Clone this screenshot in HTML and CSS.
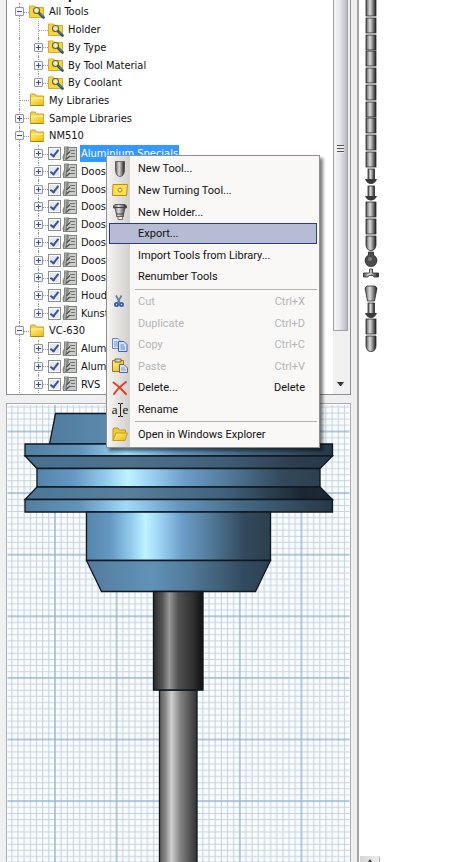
FILE: index.html
```html
<!DOCTYPE html>
<html lang="en">
<head>
  <meta charset="UTF-8" />
  <meta name="viewport" content="width=device-width, initial-scale=1.0" />
  <title>Tool Library</title>
  <link rel="stylesheet" href="styles.css">
</head>
<body>
  <!-- shared icons -->
  <svg class="defs" width="0" height="0" aria-hidden="true">
    <defs>
      <linearGradient id="gold" x1="0" y1="0" x2="1" y2="1">
        <stop offset="0" stop-color="#fff07a" />
        <stop offset="1" stop-color="#ecb90c" />
      </linearGradient>
      <linearGradient id="steel">
        <stop offset="0" stop-color="#444" />
        <stop offset="0.15" stop-color="#8a8a8a" />
        <stop offset="0.4" stop-color="#dcdcdc" />
        <stop offset="0.65" stop-color="#8c8c8c" />
        <stop offset="1" stop-color="#1c1c1c" />
      </linearGradient>
      <symbol id="i-folder" viewBox="0 0 16 16">
        <path d="M1.500 13.500V3Q1.500 2 2.500 2H6L7.500 4H14.500V13.500Z" fill="#f4d446" stroke="#c8a128" />
        <path d="M2 13V6H14.500V13Z" fill="url(#gold)" />
        <path d="M2 6H14" stroke="#fff6a8" />
        <path d="M1.500 13.500H14.500" stroke="#ad8410" />
      </symbol>
      <symbol id="i-search" viewBox="0 0 16 16">
        <path d="M0.500 13.500V2H5.500L7 3.500H14.500V13.500Z" fill="#f8d438" stroke="#d8ae20" />
        <circle cx="7.500" cy="6.500" r="3" fill="#f3eca0" stroke="#55644a" stroke-width="1.100" />
        <path d="M10.500 9.500L14.500 13.500" stroke="#22507e" stroke-width="2.600" stroke-linecap="round" />
        <path d="M11 9.500L14 12.500" stroke="#72b4c9" stroke-width="0.900" />
      </symbol>
      <symbol id="i-lib" viewBox="0 0 15 16">
        <rect x="4.500" y="1.500" width="10" height="13" fill="#cbccc8" stroke="#7f817e" />
        <path d="M8 4.500H13M9 7.500H13M8 10.500H13" stroke="#707070" />
        <path d="M2 0.500H7L6.500 5L5 8L4.500 15H1L0.500 11L2 7Z" fill="#828584" />
        <path d="M4 1L3.500 8L2.500 14" stroke="#b9bbb9" fill="none" />
        <path d="M4.500 9L8 5.500M4.500 13L8 10" stroke="#4c4c4c" stroke-width="1.400" />
      </symbol>
    </defs>
  </svg>

  <div class="app">
    <aside class="side">
      <section class="tree-panel">
        <div class="tree">
          <h1 class="tree-title"><span>p</span></h1>
          <ul class="rows">
            <li class="row"><span class="cell line stub"><button class="toggle open" aria-label="Collapse All Tools"></button></span><svg class="icon"><use href="#i-search" /></svg><span class="name">All Tools</span></li>
            <li class="row"><span class="cell line"></span><span class="cell line stub"></span><svg class="icon"><use href="#i-search" /></svg><span class="name">Holder</span></li>
            <li class="row"><span class="cell line"></span><span class="cell line stub"><button class="toggle" aria-label="Expand By Type"></button></span><svg class="icon"><use href="#i-search" /></svg><span class="name">By Type</span></li>
            <li class="row"><span class="cell line"></span><span class="cell line stub"><button class="toggle" aria-label="Expand By Tool Material"></button></span><svg class="icon"><use href="#i-search" /></svg><span class="name">By Tool Material</span></li>
            <li class="row"><span class="cell line"></span><span class="cell line stub last"><button class="toggle" aria-label="Expand By Coolant"></button></span><svg class="icon"><use href="#i-search" /></svg><span class="name">By Coolant</span></li>
            <li class="row"><span class="cell line stub"></span><svg class="icon"><use href="#i-folder" /></svg><span class="name">My Libraries</span></li>
            <li class="row"><span class="cell line stub"><button class="toggle" aria-label="Expand Sample Libraries"></button></span><svg class="icon"><use href="#i-folder" /></svg><span class="name">Sample Libraries</span></li>
            <li class="row"><span class="cell line stub"><button class="toggle open" aria-label="Collapse NM510"></button></span><svg class="icon"><use href="#i-folder" /></svg><span class="name">NM510</span></li>
            <li class="row"><span class="cell line"></span><span class="cell line stub"><button class="toggle" aria-label="Expand"></button></span><input type="checkbox" id="lib1" checked><svg class="icon lib"><use href="#i-lib" /></svg><label class="name selected" for="lib1">Aluminium Specials</label></li>
            <li class="row"><span class="cell line"></span><span class="cell line stub"><button class="toggle" aria-label="Expand"></button></span><input type="checkbox" id="lib2" checked><svg class="icon lib"><use href="#i-lib" /></svg><label class="name" for="lib2">Doos</label></li>
            <li class="row"><span class="cell line"></span><span class="cell line stub"><button class="toggle" aria-label="Expand"></button></span><input type="checkbox" id="lib3" checked><svg class="icon lib"><use href="#i-lib" /></svg><label class="name" for="lib3">Doos</label></li>
            <li class="row"><span class="cell line"></span><span class="cell line stub"><button class="toggle" aria-label="Expand"></button></span><input type="checkbox" id="lib4" checked><svg class="icon lib"><use href="#i-lib" /></svg><label class="name" for="lib4">Doos</label></li>
            <li class="row"><span class="cell line"></span><span class="cell line stub"><button class="toggle" aria-label="Expand"></button></span><input type="checkbox" id="lib5" checked><svg class="icon lib"><use href="#i-lib" /></svg><label class="name" for="lib5">Doos</label></li>
            <li class="row"><span class="cell line"></span><span class="cell line stub"><button class="toggle" aria-label="Expand"></button></span><input type="checkbox" id="lib6" checked><svg class="icon lib"><use href="#i-lib" /></svg><label class="name" for="lib6">Doos</label></li>
            <li class="row"><span class="cell line"></span><span class="cell line stub"><button class="toggle" aria-label="Expand"></button></span><input type="checkbox" id="lib7" checked><svg class="icon lib"><use href="#i-lib" /></svg><label class="name" for="lib7">Doos</label></li>
            <li class="row"><span class="cell line"></span><span class="cell line stub"><button class="toggle" aria-label="Expand"></button></span><input type="checkbox" id="lib8" checked><svg class="icon lib"><use href="#i-lib" /></svg><label class="name" for="lib8">Doos</label></li>
            <li class="row"><span class="cell line"></span><span class="cell line stub"><button class="toggle" aria-label="Expand"></button></span><input type="checkbox" id="lib9" checked><svg class="icon lib"><use href="#i-lib" /></svg><label class="name" for="lib9">Houd</label></li>
            <li class="row"><span class="cell line"></span><span class="cell line stub last"><button class="toggle" aria-label="Expand"></button></span><input type="checkbox" id="lib10" checked><svg class="icon lib"><use href="#i-lib" /></svg><label class="name" for="lib10">Kunst</label></li>
            <li class="row"><span class="cell line stub"><button class="toggle open" aria-label="Collapse VC-630"></button></span><svg class="icon"><use href="#i-folder" /></svg><span class="name">VC-630</span></li>
            <li class="row"><span class="cell line"></span><span class="cell line stub"><button class="toggle" aria-label="Expand"></button></span><input type="checkbox" id="lib11" checked><svg class="icon lib"><use href="#i-lib" /></svg><label class="name" for="lib11">Alumi</label></li>
            <li class="row"><span class="cell line"></span><span class="cell line stub"><button class="toggle" aria-label="Expand"></button></span><input type="checkbox" id="lib12" checked><svg class="icon lib"><use href="#i-lib" /></svg><label class="name" for="lib12">Alumi</label></li>
            <li class="row"><span class="cell line"></span><span class="cell line stub"><button class="toggle" aria-label="Expand"></button></span><input type="checkbox" id="lib13" checked><svg class="icon lib"><use href="#i-lib" /></svg><label class="name" for="lib13">RVS</label></li>
          </ul>
        </div>
        <div class="scrollbar">
          <div class="thumb"><span class="grip"></span></div>
          <button class="scroll-down" aria-label="Scroll down"></button>
        </div>
      </section>

      <section class="preview">
        <svg class="drawing" viewBox="7 404 344 458" preserveAspectRatio="xMidYMin slice" role="img" aria-label="Holder and tool">
          <defs>
            <pattern id="grid" patternUnits="userSpaceOnUse" x="55.500" y="431.500" width="61.600" height="61.600">
              <path d="M6.160 0V61.600M12.320 0V61.600M18.480 0V61.600M24.640 0V61.600M30.800 0V61.600M36.960 0V61.600M43.120 0V61.600M49.280 0V61.600M55.440 0V61.600" stroke="#c6cddd" />
              <path d="M0 6.160H61.600M0 12.320H61.600M0 18.480H61.600M0 24.640H61.600M0 30.800H61.600M0 36.960H61.600M0 43.120H61.600M0 49.280H61.600M0 55.440H61.600" stroke="#c8d3de" />
              <path d="M0 0V61.600M61.600 0V61.600M0 0H61.600M0 61.600H61.600" stroke="#9bb3ce" stroke-width="1.400" />
            </pattern>
            <linearGradient id="blue">
              <stop offset="0" stop-color="#5684aa" />
              <stop offset="0.130" stop-color="#6598c4" />
              <stop offset="0.250" stop-color="#97cff0" />
              <stop offset="0.320" stop-color="#bff3ff" />
              <stop offset="0.390" stop-color="#a0d6f6" />
              <stop offset="0.520" stop-color="#6c9ec9" />
              <stop offset="0.700" stop-color="#4d7391" />
              <stop offset="0.860" stop-color="#33495c" />
              <stop offset="1" stop-color="#2c3f4e" />
            </linearGradient>
            <linearGradient id="rim">
              <stop offset="0" stop-color="#527ea2" />
              <stop offset="0.180" stop-color="#6394bd" />
              <stop offset="0.330" stop-color="#9fdaf9" />
              <stop offset="0.500" stop-color="#6596bf" />
              <stop offset="0.720" stop-color="#436682" />
              <stop offset="1" stop-color="#263846" />
            </linearGradient>
            <linearGradient id="groove">
              <stop offset="0" stop-color="#4a708f" />
              <stop offset="0.350" stop-color="#4f708a" />
              <stop offset="0.650" stop-color="#405d75" />
              <stop offset="0.880" stop-color="#2b3d4e" />
              <stop offset="1" stop-color="#263a4b" />
            </linearGradient>
            <linearGradient id="groove2">
              <stop offset="0" stop-color="#4d7596" />
              <stop offset="0.330" stop-color="#58809d" />
              <stop offset="0.650" stop-color="#41617b" />
              <stop offset="0.900" stop-color="#1a2733" />
              <stop offset="1" stop-color="#1c2a35" />
            </linearGradient>
            <linearGradient id="chamfer">
              <stop offset="0" stop-color="#527b9c" />
              <stop offset="0.350" stop-color="#6092b8" />
              <stop offset="0.550" stop-color="#527b9b" />
              <stop offset="0.850" stop-color="#334b60" />
              <stop offset="1" stop-color="#2c4253" />
            </linearGradient>
            <linearGradient id="dark">
              <stop offset="0" stop-color="#2b2b2b" />
              <stop offset="0.180" stop-color="#555" />
              <stop offset="0.320" stop-color="#979797" />
              <stop offset="0.500" stop-color="#515151" />
              <stop offset="0.800" stop-color="#303030" />
              <stop offset="1" stop-color="#111" />
            </linearGradient>
            <linearGradient id="cutter">
              <stop offset="0" stop-color="#5a5a5a" />
              <stop offset="0.150" stop-color="#858585" />
              <stop offset="0.320" stop-color="#d0d0d0" />
              <stop offset="0.550" stop-color="#848484" />
              <stop offset="0.800" stop-color="#555" />
              <stop offset="1" stop-color="#333" />
            </linearGradient>
          </defs>
          <rect x="8" y="405" width="342" height="1200" fill="#f9fdff" />
          <rect x="8" y="405" width="342" height="1200" fill="url(#grid)" />
          <g stroke="#0f1820" stroke-width="1.300">
            <path d="M56 413.500H301L307 444H50Z" fill="url(#chamfer)" />
            <path d="M25.500 444H333V456H25.500Z" fill="url(#rim)" />
            <path d="M25.500 456H333L320.500 468.500H37.500Z" fill="url(#groove)" />
            <path d="M37.500 468.500H320.500V487H37.500Z" fill="url(#blue)" />
            <path d="M37.500 487H320.500L333 499.500H25.500Z" fill="url(#groove2)" />
            <path d="M25.500 499.500H333V512H25.500Z" fill="url(#rim)" />
            <path d="M87 512H271V560.500H87Z" fill="url(#blue)" />
            <path d="M87 560.500H271L256 591.500H102Z" fill="url(#chamfer)" />
            <path d="M160 690H197.500V1600H160Z" fill="url(#cutter)" />
            <path d="M154 591.500H203.500V690H154Z" fill="url(#dark)" />
          </g>
        </svg>
      </section>
    </aside>

    <main class="content">
      <svg class="tool-strip" width="16" height="353" viewBox="0 0 16 353" role="img" aria-label="Tool list">
        <g fill="url(#steel)" stroke="#2b2b2b" stroke-width="0.800">
          <rect x="3" y="-1" width="10" height="17" />
          <rect x="3" y="18" width="10" height="15" />
          <rect x="3" y="35" width="10" height="15" />
          <rect x="3" y="51" width="10" height="15" />
          <rect x="3" y="68" width="10" height="15" />
          <rect x="3" y="85" width="10" height="15" />
          <rect x="3" y="102" width="10" height="15" />
          <rect x="3" y="118" width="10" height="15" />
          <rect x="3" y="135" width="10" height="15" />
          <rect x="3" y="152" width="10" height="15" />
          <rect x="5" y="169" width="6.500" height="11" />
          <rect x="5" y="186" width="6.500" height="11" />
          <rect x="3" y="202" width="10" height="15" />
          <rect x="3" y="219" width="10" height="15" />
          <path d="M3 236H13V245Q12.500 250.500 8 250.500Q3.500 250.500 3 245Z" />
          <path d="M5.500 252H10.500V255Q14 257 14 260.500Q13 266.500 8 266.500Q3 266.500 2 260.500Q2 257 5.500 255Z" fill="#4c4c4c" />
          <path d="M6.500 269H9.500V273H15.500V277H11L10 275.500H6L5 277H0.500V273H6.500Z" />
          <path d="M2 288L4 286H12L14 288L11.500 301H4.500Z" />
          <rect x="5" y="303" width="6.500" height="11" />
          <rect x="3" y="319" width="10" height="15" />
          <path d="M3 336H13V346Q12.500 351.500 8 351.500Q3.500 351.500 3 346Z" />
        </g>
        <path d="M2 179H14Q12 184 8 184Q4 184 2 179ZM2 196H14Q12 200.500 8 200.500Q4 200.500 2 196ZM2 313H14Q12 318 8 318Q4 318 2 313Z" fill="#3a3a3a" />
        <circle cx="7" cy="259" r="2" fill="#808080" />
      </svg>
      <button class="scroll-left" aria-label="Scroll left"></button>
    </main>
  </div>

  <div class="menu" role="menu">
    <button class="item" role="menuitem">
      <svg class="glyph" viewBox="0 0 16 16"><path d="M3.500 0.500H12.500V9Q12 15.500 8 15.500Q4 15.500 3.500 9Z" fill="url(#steel)" stroke="#444" stroke-width="0.700" /></svg>
      <span>New Tool...</span>
    </button>
    <button class="item" role="menuitem">
      <svg class="glyph" viewBox="0 0 16 16"><path d="M1 2.500H15.500L14.500 13.500H0.500Z" fill="#ffe04f" stroke="#bd8c1d" /><circle cx="8" cy="8" r="2" fill="#fff3b5" stroke="#a67c1c" /></svg>
      <span>New Turning Tool...</span>
    </button>
    <button class="item" role="menuitem">
      <svg class="glyph" viewBox="0 0 16 16"><path d="M3 0.500H13L14.500 2V4H13L11.500 10.500V12.500H4.500V10.500L3 4H1.500V2Z" fill="url(#steel)" stroke="#444" stroke-width="0.800" /><path d="M6 13V15.500H10.500V13" fill="#eee" stroke="#777" /><path d="M2 3.500H14M4 10H12" stroke="#444" /></svg>
      <span>New Holder...</span>
    </button>
    <button class="item active" role="menuitem">
      <span class="glyph"></span>
      <span>Export...</span>
    </button>
    <button class="item" role="menuitem">
      <span class="glyph"></span>
      <span>Import Tools from Library...</span>
    </button>
    <button class="item" role="menuitem">
      <span class="glyph"></span>
      <span>Renumber Tools</span>
    </button>
    <hr class="sep">
    <button class="item" role="menuitem" disabled>
      <svg class="glyph" viewBox="0 0 16 16"><path d="M4 2.500L8 10M9.500 2.500L5.500 10" stroke="#6a7890" stroke-width="1.600" /><circle cx="4.500" cy="11.500" r="1.600" fill="none" stroke="#345fae" stroke-width="1.800" /><circle cx="9.500" cy="11.500" r="1.600" fill="none" stroke="#345fae" stroke-width="1.800" /></svg>
      <span>Cut</span><kbd>Ctrl+X</kbd>
    </button>
    <button class="item" role="menuitem" disabled>
      <span class="glyph"></span>
      <span>Duplicate</span><kbd>Ctrl+D</kbd>
    </button>
    <button class="item" role="menuitem" disabled>
      <svg class="glyph" viewBox="0 0 16 16"><path d="M0.500 1.500H6L8.500 4V11.500H0.500Z" fill="#dce9fb" stroke="#6685c6" /><path d="M2 5H6M2 7H6M2 9H6" stroke="#6e91d4" /><path d="M6.500 4.500H12L15 7.500V14.500H6.500Z" fill="#d5e5fb" stroke="#3f65b8" /><path d="M8.500 8H12M8.500 10H13M8.500 12H13" stroke="#5c82cf" /></svg>
      <span>Copy</span><kbd>Ctrl+C</kbd>
    </button>
    <button class="item" role="menuitem" disabled>
      <svg class="glyph" viewBox="0 0 16 16"><path d="M0.500 2.500H11.500V13.500H0.500Z" fill="url(#gold)" stroke="#9a7a1e" /><path d="M3 1H9V4H3Z" fill="#ddd6b8" stroke="#75683f" /><path d="M7.500 6.500H12L15.500 10V14.500H7.500Z" fill="#dbe4f2" stroke="#56688e" /><path d="M9 10H13M9 12H14" stroke="#8194b8" /></svg>
      <span>Paste</span><kbd>Ctrl+V</kbd>
    </button>
    <button class="item" role="menuitem">
      <svg class="glyph" viewBox="0 0 16 16"><path d="M1.500 2.500Q8 7 14 14M14 2Q6 8 2 14" fill="none" stroke="#df4126" stroke-width="2" stroke-linecap="round" /></svg>
      <span>Delete...</span><kbd>Delete</kbd>
    </button>
    <button class="item" role="menuitem">
      <span class="glyph rename-glyph" aria-hidden="true"><span>a</span><svg width="5" height="14" viewBox="0 0 5 14"><path d="M0 0.500H2L2.500 1.500L3 0.500H5M2.500 1V13M0 13.500H2L2.500 12.500L3 13.500H5" fill="none" stroke="#222" /></svg><span>e</span></span>
      <span>Rename</span>
    </button>
    <hr class="sep">
    <button class="item" role="menuitem">
      <svg class="glyph" viewBox="0 0 16 16"><path d="M1 14.500V3Q1 2 2 2H6L7.500 4H13.500V7" fill="#f3cb2b" stroke="#c1951c" /><path d="M1 14.500L4 7H15.500L13 14.500Z" fill="url(#gold)" stroke="#c79b1d" /></svg>
      <span>Open in Windows Explorer</span>
    </button>
  </div>
</body>
</html>
```

FILE: styles.css
```css
*,
*::before,
*::after {
  box-sizing: border-box;
}
body {
  margin: 0;
  background: #fff;
  font-family: "DejaVu Sans Condensed", "DejaVu Sans", sans-serif;
  font-size: 11px;
  color: #111;
}
button {
  font: inherit;
  color: inherit;
  padding: 0;
  border: none;
  background: none;
}
.defs {
  position: absolute;
}
.app {
  display: grid;
  grid-template-columns: 359px 1fr;
  height: 100vh;
}

/* left side */
.side {
  display: flex;
  flex-direction: column;
  gap: 8px;
  min-height: 0;
  padding: 0 6px;
  background: #f0f0f0;
  border-right: 2px solid #a5a5a5;
}
.tree-panel {
  display: flex;
  height: 395px;
  background: #fff;
  border: 1px solid #8b8f96;
  border-top: none;
}
.tree {
  flex: 1;
  display: flex;
  flex-direction: column;
  padding: 0 0 1px 3px;
  min-width: 0;
}
.tree-title {
  display: flex;
  align-items: flex-end;
  height: 3px;
  margin: 0;
  padding-left: 58px;
  font-size: 12px;
  line-height: 15px;
  overflow: hidden;
}
.rows {
  flex: 1;
  display: grid;
  grid-auto-rows: 1fr;
  margin: 0;
  padding: 0;
  list-style: none;
}
.row {
  display: flex;
  align-items: center;
  min-height: 0;
}
.cell {
  position: relative;
  display: flex;
  align-items: center;
  justify-content: center;
  align-self: stretch;
  width: 19px;
}
.line::before {
  content: "";
  position: absolute;
  left: 9px;
  top: 0;
  bottom: 0;
  border-left: 1px dotted #999;
}
.last::before {
  bottom: 50%;
}
.stub::after {
  content: "";
  position: absolute;
  left: 10px;
  right: 0;
  top: 50%;
  border-top: 1px dotted #999;
}
.toggle {
  position: relative;
  z-index: 1;
  width: 9px;
  height: 9px;
  border: 1px solid #8e95a5;
  border-radius: 1px;
  background:
    linear-gradient(#3c4f8c, #3c4f8c) center / 5px 1px no-repeat,
    linear-gradient(#3c4f8c, #3c4f8c) center / 1px 5px no-repeat,
    #f4f4f4;
}
.toggle.open {
  background: linear-gradient(#3c4f8c, #3c4f8c) center / 5px 1px no-repeat, #f4f4f4;
}
.icon {
  flex: none;
  width: 16px;
  height: 16px;
}
.icon.lib {
  width: 15px;
  margin-left: 1px;
}
.name {
  padding: 0 1px;
  margin-left: 3px;
  line-height: 17px;
  white-space: nowrap;
}
.name.selected {
  background: #3399ff;
  color: #fff;
}
input[type="checkbox"] {
  appearance: none;
  position: relative;
  flex: none;
  width: 13px;
  height: 13px;
  margin: 0;
  border: 1px solid #8e8f8f;
  background: #e3e8f1;
  box-shadow: inset 0 0 0 1px #fff;
}
input[type="checkbox"]:checked::after {
  content: "";
  position: absolute;
  left: 3px;
  top: 0;
  width: 5px;
  height: 9px;
  border: solid #3d4f95;
  border-width: 0 2px 2px 0;
  transform: rotate(38deg);
}

/* scrollbar */
.scrollbar {
  display: flex;
  flex-direction: column;
  justify-content: space-between;
  width: 17px;
  background: #f0f0f0;
}
.thumb {
  display: flex;
  justify-content: center;
  height: 331px;
  width: 15px;
  border: 1px solid #a2a2a6;
  border-top: none;
  background: linear-gradient(90deg, #f5f5f5, #e6e6ea 45%, #b9b9c4);
}
.grip {
  width: 7px;
  height: 8px;
  margin-top: 145px;
  background: repeating-linear-gradient(#555 0, #555 1px, #eee 1px, #eee 3px);
}
.scroll-down {
  width: 15px;
  height: 20px;
}
.scroll-down::before {
  content: "";
  display: block;
  margin: 0 auto;
  width: 7px;
  border: solid transparent;
  border-width: 4px 3px 0;
  border-top-color: #333;
}

/* holder preview */
.preview {
  flex: 1;
  min-height: 0;
  background: #fff;
  border: 1px solid #a9adb3;
  border-bottom: none;
}
.drawing {
  display: block;
  width: 100%;
  height: 100%;
}

/* right side */
.content {
  display: flex;
  flex-direction: column;
  align-items: flex-start;
  justify-content: space-between;
}
.tool-strip {
  display: block;
  margin-left: 4px;
}
.scroll-left {
  width: 20px;
  height: 6px;
  margin-left: 1px;
  background: linear-gradient(90deg, #d5d5d5, #eee);
  border-right: 1px solid #aaa;
  border-radius: 0 2px 0 0;
}
.scroll-left::before {
  content: "";
  display: block;
  margin: 3px auto 0;
  width: 4px;
  border: solid transparent;
  border-width: 0 2px 3px;
  border-bottom-color: #444;
}

/* context menu */
.menu {
  position: absolute;
  left: 106px;
  top: 155px;
  display: flex;
  flex-direction: column;
  width: 214px;
  height: 293px;
  padding: 2px;
  border: 1px solid #8f8f8f;
  background: linear-gradient(90deg, #f6f5f3, #d2d0cb 23px, #f9f8f7 23px);
  box-shadow: 3px 3px 3px rgba(0, 0, 0, 0.5);
  font-family: Roboto, "Liberation Sans", Arial, sans-serif;
}
.item {
  flex: 1;
  display: flex;
  align-items: center;
  gap: 10px;
  padding: 0 11px 0 2px;
  border: 1px solid transparent;
  text-align: left;
  white-space: nowrap;
}
.item.active {
  border-color: #2a3a86;
  background: #b5bcd4;
}
.item:disabled {
  color: #b5b5b5;
}
.item kbd {
  margin-left: auto;
  font: inherit;
}
.glyph {
  flex: none;
  width: 16px;
  height: 16px;
}
.rename-glyph {
  display: flex;
  align-items: center;
  justify-content: center;
  font-family: "Liberation Serif", serif;
  font-size: 13px;
}
.rename-glyph svg {
  flex: none;
}
.sep {
  height: 3px;
  width: 182px;
  margin: 0 0 0 auto;
  border: solid transparent;
  border-width: 1px 0;
  background: #b5b3ae content-box;
  background-clip: content-box;
}
```
